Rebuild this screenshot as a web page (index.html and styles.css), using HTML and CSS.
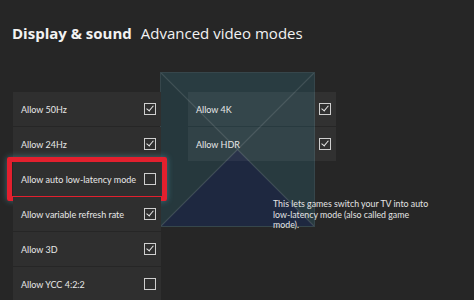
FILE: index.html
```html
<!DOCTYPE html>
<html>
<head>
<meta charset="utf-8">
<link rel="stylesheet" href="styles.css">
</head>
<body>
<div class="page">
  <h1 class="title"><span class="title-main">Display &amp; sound</span><span class="title-sub">Advanced video modes</span></h1>
  <div class="content">
    <svg class="preview" width="155" height="155" viewBox="0 0 155 155">
      <polygon points="0,0 155,0 77.5,77.5" fill="#293c41"/>
      <polygon points="0,0 0,155 77.5,77.5" fill="#26383d"/>
      <polygon points="155,0 155,155 77.5,77.5" fill="#283a3f"/>
      <polygon points="0,155 155,155 77.5,77.5" fill="#1e2840"/>
      <line x1="0" y1="0" x2="155" y2="155" stroke="#5a6a70" stroke-width="1.2" opacity="0.55"/>
      <line x1="155" y1="0" x2="0" y2="155" stroke="#5a6a70" stroke-width="1.2" opacity="0.55"/>
      <rect x="0.5" y="0.5" width="154" height="154" fill="none" stroke="#36464b" stroke-width="1"/>
    </svg>
    <div class="col col-left">
      <div class="row"><span>Allow 50Hz</span><span class="box checked"></span></div>
      <div class="row"><span>Allow 24Hz</span><span class="box checked"></span></div>
      <div class="row focused"><span>Allow auto low-latency mode</span><span class="box"></span></div>
      <div class="row"><span>Allow variable refresh rate</span><span class="box checked"></span></div>
      <div class="row"><span>Allow 3D</span><span class="box checked"></span></div>
      <div class="row"><span>Allow YCC 4:2:2</span><span class="box"></span></div>
    </div>
    <div class="col col-right">
      <div class="row"><span>Allow 4K</span><span class="box checked"></span></div>
      <div class="row"><span>Allow HDR</span><span class="box checked"></span></div>
      <p class="desc">This lets games switch your TV into auto low-latency mode (also called game mode).</p>
    </div>
  </div>
</div>
</body>
</html>
```
FILE: styles.css
```css
html, body {
  margin: 0;
  padding: 0;
  background: #262626;
  width: 474px;
  height: 300px;
  overflow: hidden;
  font-family: "Open Sans", "Noto Sans", sans-serif;
  color: #e6e6e6;
}
.page {
  padding: 23px 0 0 12px;
}
.title {
  margin: 0;
  font-size: 15px;
  line-height: 21px;
  font-weight: normal;
  color: #f2f2f2;
  display: flex;
  gap: 9px;
}
.title-main {
  font-weight: 700;
}
.title-sub {
  font-weight: 400;
}
.content {
  position: relative;
  display: flex;
  gap: 27px;
  margin-top: 48px;
  padding-left: 1px;
}
.preview {
  position: absolute;
  left: 148px;
  top: -20px;
  display: block;
}
.col {
  position: relative;
  display: flex;
  flex-direction: column;
  gap: 1px;
  width: 148px;
}
.row {
  position: relative;
  height: 34px;
  display: flex;
  align-items: center;
  justify-content: space-between;
  padding: 0 5px 0 8px;
  box-sizing: border-box;
  font-family: "Lato", "Open Sans", sans-serif;
  font-size: 9px;
  white-space: nowrap;
  color: #e8e8e8;
}
.col-left .row {
  background: #2f2f2f;
}
.col-right .row {
  background: rgba(255, 255, 255, 0.055);
}
.box {
  width: 10px;
  height: 10px;
  border: 1px solid #cfcfcf;
  position: relative;
  flex: none;
}
.box.checked::after {
  content: "";
  position: absolute;
  left: 3px;
  top: 0px;
  width: 3px;
  height: 6px;
  border-right: 1px solid #e8e8e8;
  border-bottom: 1px solid #e8e8e8;
  transform: rotate(40deg);
}
.focused::after {
  content: "";
  position: absolute;
  left: -6px;
  right: -6px;
  top: -5px;
  bottom: -5px;
  border: 5px solid #e3202e;
  border-radius: 2px;
  box-shadow: 0 0 6px rgba(90, 190, 210, 0.45);
}
.desc {
  margin: 37px 0 0 85px;
  width: 162px;
  font-family: "Lato", "Open Sans", sans-serif;
  font-size: 8.8px;
  line-height: 10.5px;
  color: #e4e4e4;
}
```
